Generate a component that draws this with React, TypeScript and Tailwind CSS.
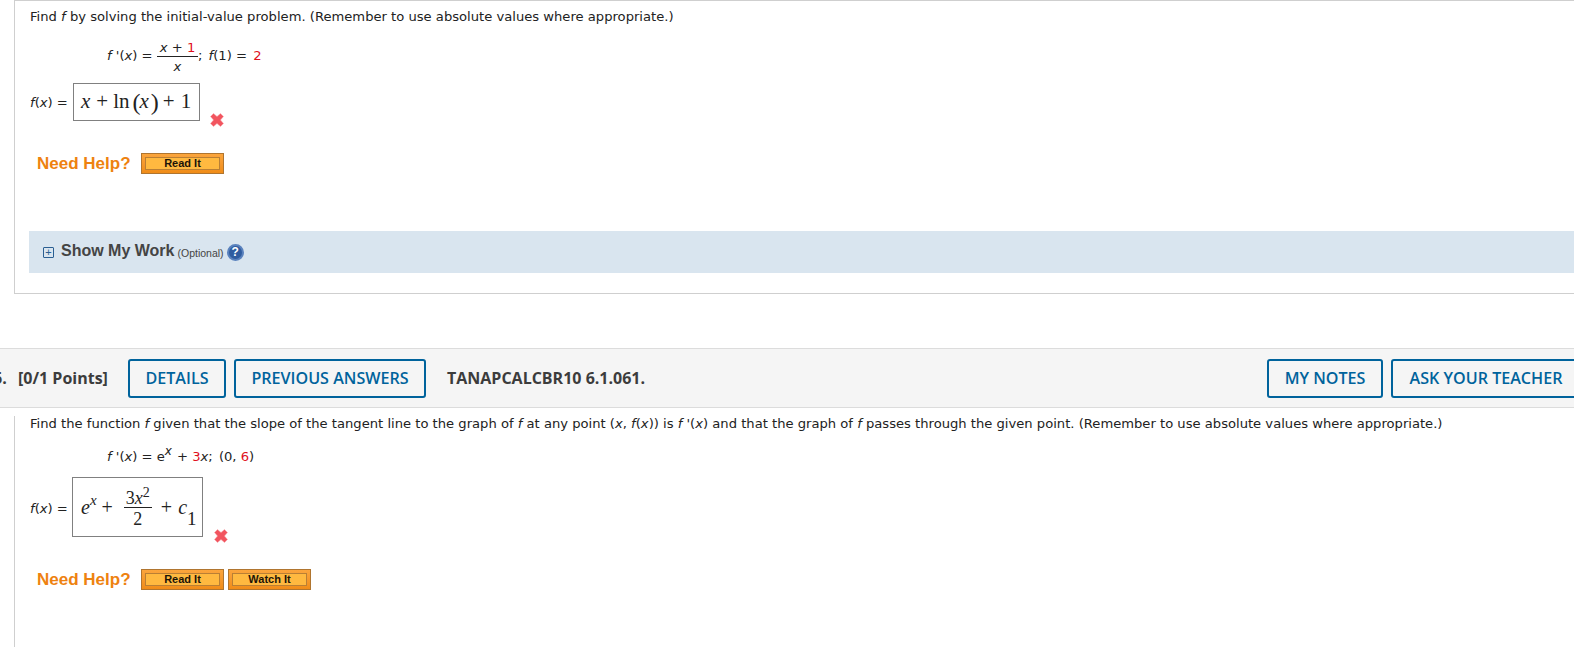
const verdana = "font-['DejaVu_Sans',sans-serif]";
const serif = "font-['Liberation_Serif',serif]";
const arial = "font-['Liberation_Sans',sans-serif]";
const open = "font-['Open_Sans',sans-serif]";

function WrongMark() {
  return (
    <svg className="h-[14px] w-[14px]" viewBox="0 0 14 14">
      <path d="M0.5 3.5 L3.5 0.5 L7 3.5 L10.5 0.5 L13.5 3.5 L10.5 7 L13.5 10.5 L10.5 13.5 L7 10.5 L3.5 13.5 L0.5 10.5 L3.5 7 Z" fill="#f2555f" stroke="#f7a5aa" strokeWidth="0.5" />
    </svg>
  );
}

function HelpButton({ label }: { label: string }) {
  return (
    <button className="flex h-[21px] w-[83px] items-center border border-[#b0752f] bg-linear-to-b from-[#fba53c] to-[#f08c17] p-[3px]">
      <span className={`${arial} flex h-[13px] w-full items-center justify-center border border-[#b97f35] bg-[#ffb940] text-[11px] font-bold text-[#1c1408]`}>{label}</span>
    </button>
  );
}

function NeedHelp({ children }: { children: React.ReactNode }) {
  return (
    <div className="flex h-[21px] items-center pl-[7px]">
      <span className={`${arial} w-[104px] text-[17px] font-bold text-[#ee8210]`}>Need Help?</span>
      <div className="flex gap-[4px]">{children}</div>
    </div>
  );
}

function OutlineButton({ label, width }: { label: string; width: string }) {
  return (
    <button className={`${open} ${width} h-[39px] shrink-0 rounded-[3px] border-2 border-[#00639c] text-center text-[16.1px] font-semibold text-[#00639c]`}>{label}</button>
  );
}

export default function App() {
  return (
    <div className={`${verdana} h-[647px] w-[1574px] overflow-hidden bg-white text-[13.13px] text-[#222]`}>
      <section className="ml-[14px] h-[294px] border-y border-l border-[#cfcfcf] pl-[15px]">
        <p className="mt-[8px] h-[16px] leading-[16px]">
          Find <i>f</i> by solving the initial-value problem. (Remember to use absolute values where appropriate.)
        </p>

        <div className="mt-[15px] flex h-[36px] items-center pl-[77px]">
          <span className="mb-[4px] w-[50px]"><i>f</i> '(<i>x</i>) =</span>
          <span className="inline-flex w-[41px] flex-col items-center">
            <span className="h-[15px] w-full whitespace-nowrap border-b border-[#222] text-center leading-[11px]"><i>x</i> + <span className="text-[#e0101c]">1</span></span>
            <span className="h-[18px] leading-[20px]"><i>x</i></span>
          </span>
          <span className="mb-[4px] whitespace-pre">; <i className="ml-[2px]">f</i>(1) =<span className="ml-[2px] text-[#e0101c]"> 2</span></span>
        </div>

        <div className="mt-[7px] flex h-[38px] items-center">
          <span className="w-[43px] pt-[1px]"><i>f</i>(<i>x</i>) =</span>
          <div className={`${serif} flex h-[38px] w-[127px] items-center border border-[#808080] pl-[7px] text-[21px] text-[#222]`}>
            <i>x</i>
            <span className="ml-[6px]">+</span>
            <span className="ml-[5px]">ln</span>
            <span className="ml-[3px] text-[24px] font-light leading-none">(</span>
            <i className="ml-[-1px]">x</i>
            <span className="ml-[2px] text-[24px] font-light leading-none">)</span>
            <span className="ml-[4px]">+</span>
            <span className="ml-[6px]">1</span>
          </div>
          <div className="-mb-[6px] ml-[10px] self-end"><WrongMark /></div>
        </div>

        <div className="mt-[32px]">
          <NeedHelp><HelpButton label="Read It" /></NeedHelp>
        </div>

        <div className={`${arial} -ml-[1px] mt-[57px] flex h-[42px] items-center bg-[#d9e5ef] pl-[14px]`}>
          <span className="flex h-[11px] w-[11px] items-center justify-center rounded-[1px] border border-[#2b5f92] text-[11px] leading-none text-[#2b5f92]">+</span>
          <span className="mb-[2px] ml-[7px] text-[16px] font-bold text-[#444]">Show My Work</span>
          <span className="ml-[3px] mt-[3px] text-[10.5px] text-[#444]">(Optional)</span>
          <span className="ml-[3px] flex h-[17px] w-[17px] items-center justify-center rounded-full border-2 border-[#5a82bd] bg-[#2f5c9f] text-[12px] font-bold text-white">?</span>
        </div>
      </section>

      <header className={`${open} mt-[54px] flex h-[60px] items-center border-y border-[#dcdcdc] bg-[#f5f5f5] text-[16px] font-bold text-[#3c3c3c]`}>
        <span className="-ml-[7px] w-[25px] whitespace-nowrap">6.</span>
        <span className="w-[110px]">[0/1 Points]</span>
        <OutlineButton label="DETAILS" width="w-[98px]" />
        <div className="ml-[8px]"><OutlineButton label="PREVIOUS ANSWERS" width="w-[192px]" /></div>
        <span className="ml-[21px]">TANAPCALCBR10 6.1.061.</span>
        <div className="ml-auto flex gap-[8px]">
          <OutlineButton label="MY NOTES" width="w-[116px]" />
          <OutlineButton label="ASK YOUR TEACHER" width="w-[190px] -mr-[7px]" />
        </div>
      </header>

      <section className="ml-[14px] h-[240px] border-l border-[#cfcfcf] pl-[15px]">
        <p className="mt-[8px] h-[16px] leading-[16px]">
          Find the function <i>f</i> given that the slope of the tangent line to the graph of <i>f</i> at any point (<i>x</i>, <i>f</i>(<i>x</i>)) is <i>f</i> '(<i>x</i>) and that the graph of <i>f</i> passes through the given point. (Remember to use absolute values where appropriate.)
        </p>

        <div className="mt-[17px] h-[16px] pl-[77px] leading-[16px] whitespace-pre">
          <i>f</i> '(<i>x</i>) = e<sup className="text-[12px]"><i>x</i></sup><span className="ml-[5px]">+ </span><span className="text-[#e0101c]">3</span><i>x</i>; <span className="ml-[2px]">(0, </span><span className="text-[#e0101c]">6</span>)
        </div>

        <div className="mt-[12px] flex h-[60px] items-center">
          <span className="w-[42px] pt-[3px]"><i>f</i>(<i>x</i>) =</span>
          <div className={`${serif} flex h-[60px] w-[131px] items-center border border-[#808080] pl-[8px] text-[20px] text-[#222]`}>
            <i>e</i>
            <sup className="text-[15px]"><i>x</i></sup>
            <span className="ml-[5px]">+</span>
            <span className="ml-[11px] inline-flex w-[28px] flex-col items-center leading-none">
              <span className="h-[22px] w-full whitespace-nowrap border-b border-[#222] text-center text-[18px] leading-[24px]">3<i>x</i><sup className="text-[14px]">2</sup></span>
              <span className="mt-[2px] text-[18px]">2</span>
            </span>
            <span className="ml-[9px]">+</span>
            <i className="ml-[6px]">c</i>
            <sub className="mt-[14px] text-[19px]">1</sub>
          </div>
          <div className="-mb-[6px] ml-[11px] self-end"><WrongMark /></div>
        </div>

        <div className="mt-[32px]">
          <NeedHelp>
            <HelpButton label="Read It" />
            <HelpButton label="Watch It" />
          </NeedHelp>
        </div>
      </section>
    </div>
  );
}
